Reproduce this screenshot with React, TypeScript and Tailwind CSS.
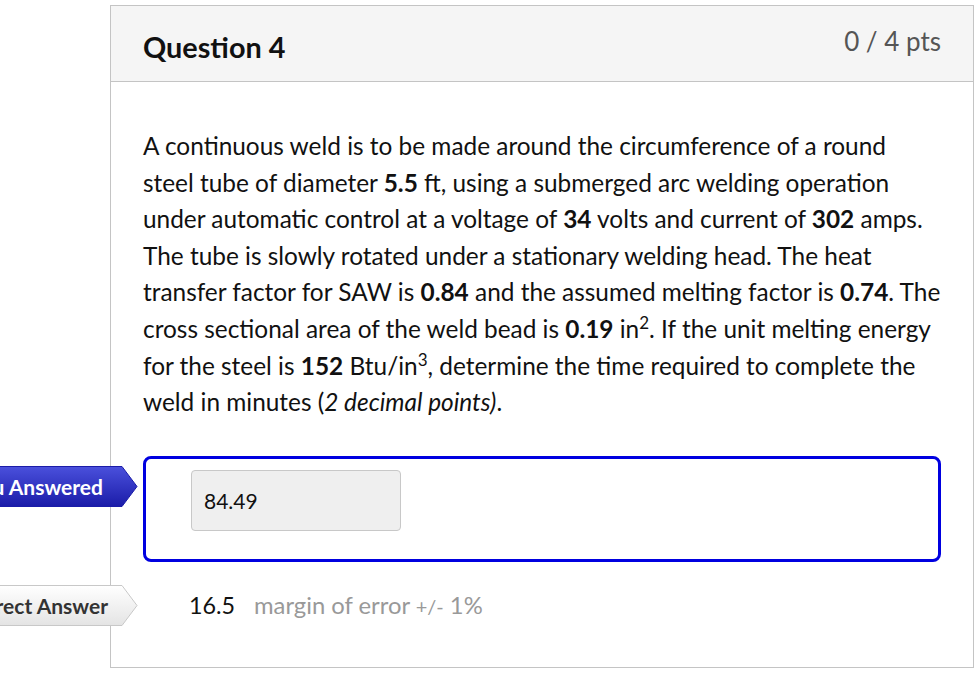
import React from 'react';

const lato = { fontFamily: 'Lato, "Open Sans", sans-serif' };

function Tag({ label, variant, top }: { label: string; variant: 'blue' | 'gray'; top: number }) {
  const blue = variant === 'blue';
  return (
    <div className="absolute left-0 h-[41px] w-[138px]" style={{ top }}>
      <svg className="absolute inset-0" width="138" height="41" viewBox="0 0 138 41">
        <defs>
          <linearGradient id={`g-${variant}`} x1="0" y1="0" x2="0" y2="1">
            {blue ? (
              <>
                <stop offset="0" stopColor="#4a50dc" />
                <stop offset="1" stopColor="#1b1ca8" />
              </>
            ) : (
              <>
                <stop offset="0" stopColor="#ffffff" />
                <stop offset="1" stopColor="#e4e4e4" />
              </>
            )}
          </linearGradient>
        </defs>
        <polygon
          points="-2,0.5 122,0.5 137,20.5 122,40.5 -2,40.5"
          fill={`url(#g-${variant})`}
          stroke={blue ? '#1b1ca8' : '#c8c8c8'}
          strokeWidth="1"
        />
      </svg>
      <div
        className={`relative flex h-full w-[122px] items-center justify-end overflow-hidden whitespace-nowrap ${
          blue ? 'pr-[19px]' : 'pr-[14px]'
        }`}
      >
        <span
          className={`text-[21px] font-bold ${blue ? 'text-white' : 'text-[#333333]'}`}
          style={lato}
        >
          {label}
        </span>
      </div>
    </div>
  );
}

export default function App() {
  return (
    <div className="relative min-h-[673px] bg-white pt-[5px]" style={lato}>
      <div className="ml-[110px] w-[864px] border border-[#c4c4c4]">
        {/* Header */}
        <div className="flex h-[76px] items-start justify-between border-b border-[#c4c4c4] bg-[#f5f5f5] pl-[32px] pr-[32px]">
          <h2 className="mt-[21px] text-[28.8px] font-bold leading-[40px] text-[#111111]">Question 4</h2>
          <span className="mt-[17px] text-[26px] leading-[36px] text-[#555555]">0 / 4 pts</span>
        </div>

        {/* Body */}
        <div className="px-[32px] pb-[44px] pt-[46px]">
          <p className="text-[24.4px] leading-[36.6px] text-[#111111]">
            A continuous weld is to be made around the circumference of a round
            <br />
            steel tube of diameter <b>5.5</b> ft, using a submerged arc welding operation
            <br />
            under automatic control at a voltage of <b>34</b> volts and current of <b>302</b> amps.
            <br />
            The tube is slowly rotated under a stationary welding head. The heat
            <br />
            transfer factor for SAW is <b>0.84</b> and the assumed melting factor is <b>0.74</b>. The
            <br />
            cross sectional area of the weld bead is <b>0.19</b> in
            <sup className="text-[17px]">2</sup>. If the unit melting energy
            <br />
            for the steel is <b>152</b> Btu/in<sup className="text-[17px]">3</sup>, determine the time required to complete the
            <br />
            weld in minutes (<i>2 decimal points)</i>.
          </p>

          {/* Your answer */}
          <div className="mt-[35px] h-[106px] rounded-[8px] border-[3px] border-[#0000e0] pl-[45px] pt-[11px]">
            <div className="flex h-[61px] w-[210px] items-center rounded-[4px] border border-[#c8c8c8] bg-[#efefef] pl-[12px] text-[21px] text-[#111111]">
              84.49
            </div>
          </div>

          {/* Correct answer */}
          <div className="mt-[26px] flex items-baseline pl-[46px]">
            <span className="text-[23.3px] text-[#111111]">16.5</span>
            <span className="ml-[19px] text-[23.8px] text-[#999999]">
              margin of error <span className="text-[20px]">+/-</span> 1%
            </span>
          </div>
        </div>
      </div>

      <Tag label="You Answered" variant="blue" top={466} />
      <Tag label="Correct Answer" variant="gray" top={585} />
    </div>
  );
}
